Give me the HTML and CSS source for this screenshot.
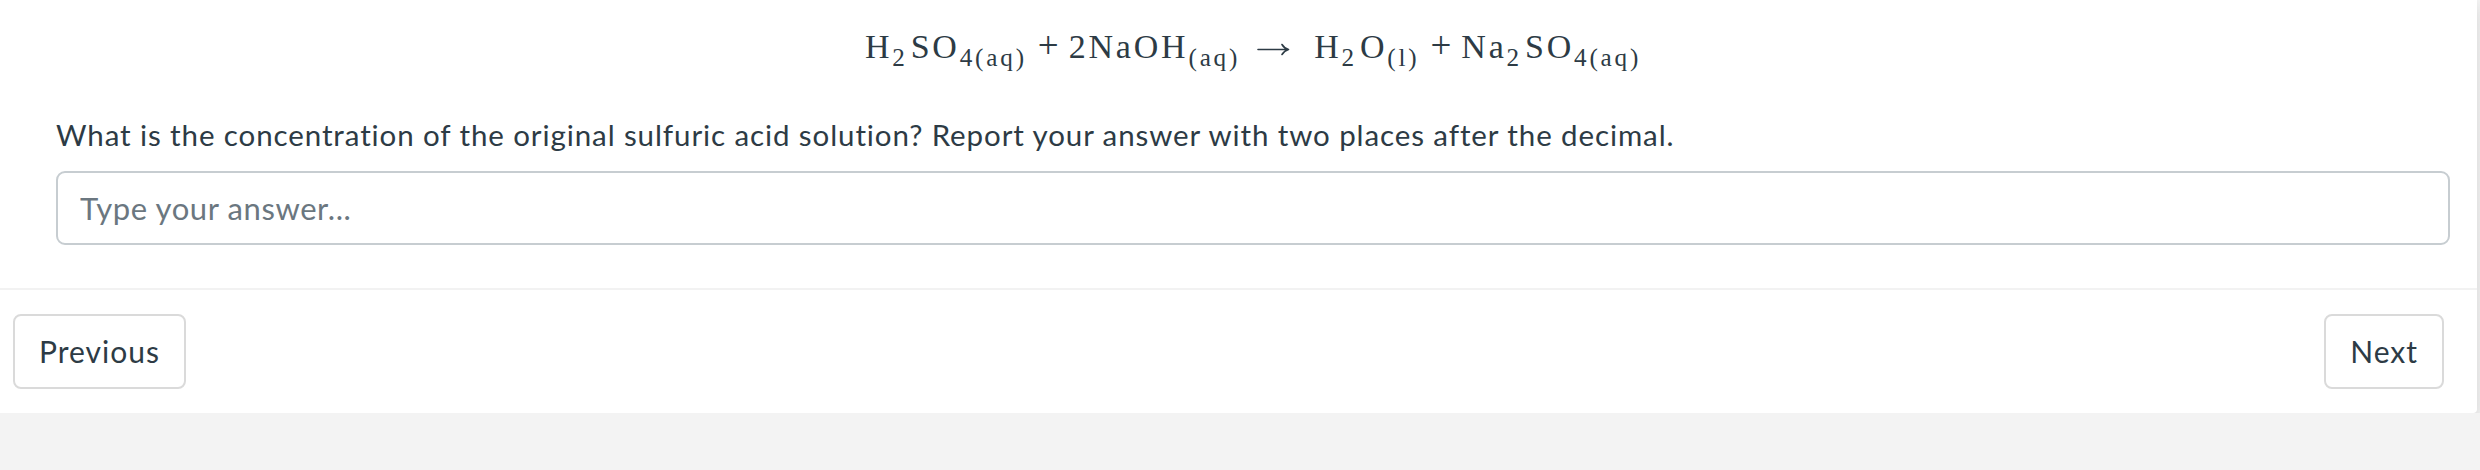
FILE: index.html
```html
<!DOCTYPE html>
<html lang="en">
<head>
<meta charset="utf-8">
<title>Question</title>
<link rel="stylesheet" href="styles.css">
</head>
<body>
<div class="card">
  <div class="content">
    <div class="equation"><span class="chem">H<sub>2</sub><span class="sp1"></span>SO<sub>4(aq)</sub></span><span class="op">+</span><span class="chem">2NaOH<sub>(aq)</sub></span><span class="arrow"><svg width="33" height="16" viewBox="0 0 33 16" aria-hidden="true"><path d="M1 8.5H31M25 3.5C26.5 6 28.5 7.7 31.5 8.5C28.5 9.3 26.5 11 25 13.5" fill="none" stroke="#2d3b45" stroke-width="1.6" stroke-linecap="round" stroke-linejoin="round"/></svg></span><span class="chem">H<sub>2</sub><span class="sp1"></span>O<sub>(l)</sub></span><span class="op">+</span><span class="chem">Na<sub>2</sub><span class="sp1"></span>SO<sub>4(aq)</sub></span></div>
    <p class="question">What is the concentration of the original sulfuric acid solution? Report your answer with two places after the decimal.</p>
    <input class="answer" type="text" placeholder="Type your answer...">
  </div>
  <div class="footer">
    <button class="btn" type="button">Previous</button>
    <button class="btn" type="button">Next</button>
  </div>
</div>
</body>
</html>
```

FILE: styles.css
```css
html, body {
  margin: 0;
  padding: 0;
}
body {
  background: #f3f3f3;
  font-family: Lato, "Open Sans", sans-serif;
  color: #2d3b45;
}
.card {
  width: 2477px;
  background: #ffffff;
  box-shadow: 0 6px 16px rgba(0, 0, 0, 0.13);
  border-bottom-right-radius: 4px;
}
.content {
  padding: 26px 27px 43px 56px;
}
.equation {
  text-align: center;
  font-family: "Liberation Serif", "Times New Roman", serif;
  font-size: 34px;
  line-height: 40px;
  height: 40px;
  color: #2d3b45;
}
.chem {
  letter-spacing: 2.8px;
}
.chem sub {
  font-size: 0.74em;
  vertical-align: -0.32em;
  line-height: 0;
}
.sp1 {
  display: inline-block;
  width: 3px;
}
.op {
  display: inline-block;
  margin: 0 10px 0 11px;
  font-size: 37px;
}
.arrow {
  display: inline-block;
  margin: 0 24px 0 17px;
  vertical-align: 1px;
}
.arrow svg {
  display: block;
}
.question {
  margin: 51px 0 19px 0;
  font-size: 29.5px;
  letter-spacing: 0.9px;
  line-height: 35px;
}
.answer {
  display: block;
  box-sizing: border-box;
  width: 100%;
  height: 74px;
  margin: 0;
  padding: 0 22px;
  border: 2px solid #c7cdd1;
  border-radius: 9px;
  font-family: Lato, sans-serif;
  font-size: 31px;
  letter-spacing: 0.6px;
  line-height: 70px;
  color: #2d3b45;
  background: #ffffff;
  outline: none;
}
.answer::placeholder {
  color: #6b7780;
  opacity: 1;
}
.footer {
  border-top: 2px solid #f2f2f2;
  padding: 24px 33px 24px 13px;
  display: flex;
  justify-content: space-between;
  align-items: center;
}
.btn {
  box-sizing: border-box;
  height: 75px;
  padding: 0 24px;
  border: 2px solid #dadada;
  border-radius: 8px;
  background: #ffffff;
  font-family: Lato, sans-serif;
  font-size: 30px;
  letter-spacing: 1px;
  color: #2d3b45;
  line-height: 71px;
  cursor: pointer;
}
```
